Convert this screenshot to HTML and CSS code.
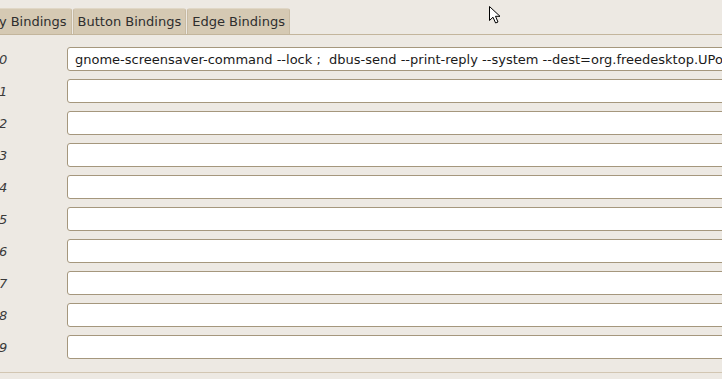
FILE: index.html
```html
<!DOCTYPE html>
<html lang="en">
<head>
    <meta charset="UTF-8">
    <title>Commands</title>
    <link rel="stylesheet" href="styles.css">
</head>
<body>
    <div class="tabs">
        <div class="tab">Key Bindings</div>
        <div class="tab">Button Bindings</div>
        <div class="tab">Edge Bindings</div>
    </div>
    <div class="panel">
        <div class="row"><span class="num">0</span><input class="cmd" type="text" value="gnome-screensaver-command --lock ;  dbus-send --print-reply --system --dest=org.freedesktop.UPower /org/freedesktop/UPower org.freedesktop.UPower.Suspend"></div>
        <div class="row"><span class="num">1</span><input class="cmd" type="text"></div>
        <div class="row"><span class="num">2</span><input class="cmd" type="text"></div>
        <div class="row"><span class="num">3</span><input class="cmd" type="text"></div>
        <div class="row"><span class="num">4</span><input class="cmd" type="text"></div>
        <div class="row"><span class="num">5</span><input class="cmd" type="text"></div>
        <div class="row"><span class="num">6</span><input class="cmd" type="text"></div>
        <div class="row"><span class="num">7</span><input class="cmd" type="text"></div>
        <div class="row"><span class="num">8</span><input class="cmd" type="text"></div>
        <div class="row"><span class="num">9</span><input class="cmd" type="text"></div>
    </div>
    <div class="footer"></div>
    <svg class="pointer" width="14" height="20" viewBox="0 0 14 20">
        <path d="M1.5 1.5 L1.5 15.5 L5 12.2 L7.6 18 L10 17 L7.5 11.3 L12 11.3 Z" fill="#fff" stroke="#000" stroke-width="1" stroke-linejoin="miter"/>
    </svg>
</body>
</html>
```

FILE: styles.css
```css
body {
    margin: 0;
    padding: 0;
    background-color: #ede9e3;
    font-family: "DejaVu Sans", Verdana, sans-serif;
    font-size: 13px;
    color: #1a1a1a;
    width: 722px;
    height: 379px;
    overflow: hidden;
    position: relative;
}

.tabs {
    display: flex;
    gap: 1px;
    padding-top: 8px;
    margin-left: -22px;
    border-bottom: 1px solid #c3b59c;
    width: 760px;
}

.tab {
    height: 25px;
    line-height: 25px;
    padding: 0 4px;
    background-color: #d5c9b3;
    border: 1px solid #c8bba3;
    border-bottom: none;
    border-top-color: #e0d7c6;
    border-radius: 3px 3px 0 0;
    color: #2e2e2e;
}

.panel {
    display: flex;
    flex-direction: column;
    gap: 8px;
    padding-top: 12px;
}

.row {
    display: flex;
    align-items: center;
}

.num {
    flex: none;
    width: 68px;
    margin-left: -1px;
    font-style: italic;
    color: #3a3a3a;
}

.cmd {
    flex: none;
    width: 700px;
    height: 24px;
    box-sizing: border-box;
    margin: 0;
    padding: 0 7px;
    border: 1px solid #a5977d;
    border-radius: 3px;
    background-color: #fff;
    font-family: "DejaVu Sans", Verdana, sans-serif;
    font-size: 13px;
    color: #1a1a1a;
    outline: none;
}

.footer {
    margin-top: 13px;
    border-top: 1px solid #d2c6b2;
}

.pointer {
    position: absolute;
    left: 488px;
    top: 5px;
}
```
